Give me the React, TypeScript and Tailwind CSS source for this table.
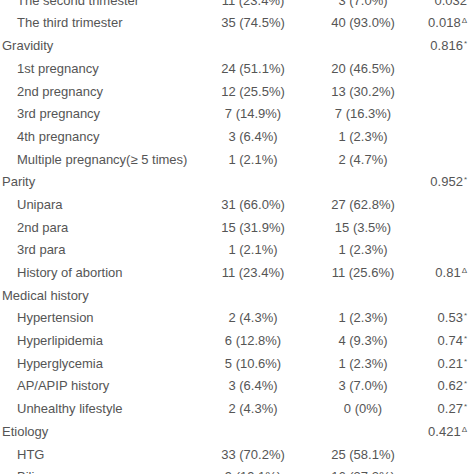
import React from "react";

type Row = { label: string; top?: boolean; a?: string; b?: string; p?: string; sup?: string };

const rows: Row[] = [
  { label: "The second trimester", a: "11 (23.4%)", b: "3 (7.0%)", p: "0.032" },
  { label: "The third trimester", a: "35 (74.5%)", b: "40 (93.0%)", p: "0.018", sup: "Δ" },
  { label: "Gravidity", top: true, p: "0.816", sup: "*" },
  { label: "1st pregnancy", a: "24 (51.1%)", b: "20 (46.5%)" },
  { label: "2nd pregnancy", a: "12 (25.5%)", b: "13 (30.2%)" },
  { label: "3rd pregnancy", a: "7 (14.9%)", b: "7 (16.3%)" },
  { label: "4th pregnancy", a: "3 (6.4%)", b: "1 (2.3%)" },
  { label: "Multiple pregnancy(≥ 5 times)", a: "1 (2.1%)", b: "2 (4.7%)" },
  { label: "Parity", top: true, p: "0.952", sup: "*" },
  { label: "Unipara", a: "31 (66.0%)", b: "27 (62.8%)" },
  { label: "2nd para", a: "15 (31.9%)", b: "15 (3.5%)" },
  { label: "3rd para", a: "1 (2.1%)", b: "1 (2.3%)" },
  { label: "History of abortion", a: "11 (23.4%)", b: "11 (25.6%)", p: "0.81", sup: "Δ" },
  { label: "Medical history", top: true },
  { label: "Hypertension", a: "2 (4.3%)", b: "1 (2.3%)", p: "0.53", sup: "*" },
  { label: "Hyperlipidemia", a: "6 (12.8%)", b: "4 (9.3%)", p: "0.74", sup: "*" },
  { label: "Hyperglycemia", a: "5 (10.6%)", b: "1 (2.3%)", p: "0.21", sup: "*" },
  { label: "AP/APIP history", a: "3 (6.4%)", b: "3 (7.0%)", p: "0.62", sup: "*" },
  { label: "Unhealthy lifestyle", a: "2 (4.3%)", b: "0 (0%)", p: "0.27", sup: "*" },
  { label: "Etiology", top: true, p: "0.421", sup: "Δ" },
  { label: "HTG", a: "33 (70.2%)", b: "25 (58.1%)" },
  { label: "Biliary", a: "9 (19.1%)", b: "16 (37.2%)" },
];

export default function App() {
  return (
    <div
      className="w-[474px] h-[474px] overflow-hidden bg-white text-[#555555] text-[13px]"
      style={{ fontFamily: '"Liberation Sans", Arial, sans-serif' }}
    >
      <div className="-mt-[10.8px] flex flex-col">
        {rows.map((r, i) => (
          <div key={i} className="flex h-[22.7px] items-center whitespace-nowrap">
            <div className={`w-[198px] ${r.top ? "pl-[2px]" : "pl-[17px]"}`}>{r.label}</div>
            <div className="w-[110px] text-center">{r.a ?? ""}</div>
            <div className="w-[110px] text-center">{r.b ?? ""}</div>
            <div className="w-[56px] pr-[7px] text-right">
              {r.p ?? ""}
              {r.sup && (
                <span className="relative -top-[4px] ml-[1px] text-[8px]">{r.sup}</span>
              )}
            </div>
          </div>
        ))}
      </div>
    </div>
  );
}
